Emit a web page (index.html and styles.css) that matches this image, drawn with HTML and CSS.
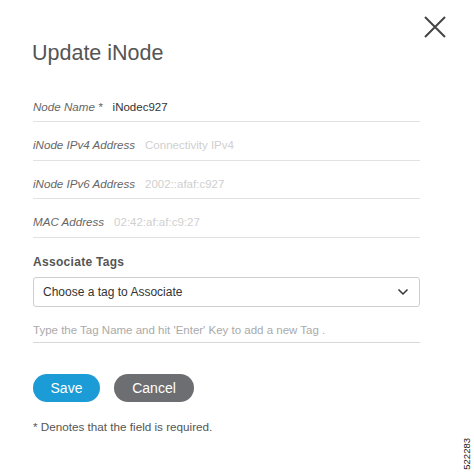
FILE: index.html
```html
<!DOCTYPE html>
<html lang="en">
<head>
    <meta charset="UTF-8">
    <meta name="viewport" content="width=device-width, initial-scale=1.0">
    <title>Update iNode</title>

    <link rel="stylesheet" href="styles.css">
</head>
<body>
    <div class="dialog">
        <div class="dialog-top">
            <button type="button" class="close-btn" aria-label="Close">
                <svg width="22" height="22" viewBox="0 0 22 22">
                    <path d="M1 1 L21 21 M21 1 L1 21" stroke="#444" stroke-width="2" fill="none"/>
                </svg>
            </button>
        </div>

        <h1 class="dialog-title">Update iNode</h1>

        <form class="inode-form">
            <!-- Champs de l'iNode -->
            <div class="field">
                <label>Node Name *</label>
                <span class="value">iNodec927</span>
            </div>
            <div class="field">
                <label>iNode IPv4 Address</label>
                <span class="value muted">Connectivity IPv4</span>
            </div>
            <div class="field">
                <label>iNode IPv6 Address</label>
                <span class="value muted">2002::afaf:c927</span>
            </div>
            <div class="field">
                <label>MAC Address</label>
                <span class="value muted">02:42:af:af:c9:27</span>
            </div>

            <!-- Tags -->
            <div class="tags-label">Associate Tags</div>
            <div class="tag-select">
                <span>Choose a tag to Associate</span>
                <svg width="12" height="8" viewBox="0 0 12 8">
                    <path d="M1.5 1.5 L6 6 L10.5 1.5" stroke="#333" stroke-width="1.5" fill="none"/>
                </svg>
            </div>
            <input type="text" class="tag-input" placeholder="Type the Tag Name and hit 'Enter' Key to add a new Tag .">

            <!-- Boutons -->
            <div class="form-buttons">
                <button type="button" class="btn save-btn">Save</button>
                <button type="button" class="btn cancel-btn">Cancel</button>
            </div>

            <p class="note">* Denotes that the field is required.</p>
        </form>

        <span class="figure-id">522283</span>
    </div>
</body>
</html>
```

FILE: styles.css
```css
/* Style général */
body {
    margin: 0;
    padding: 0;
    background-color: #fff;
    color: #333;
    font-family: "Liberation Sans", Arial, sans-serif;
}

.dialog {
    position: relative;
    width: 474px;
    height: 474px;
    padding-left: 33px;
    box-sizing: border-box;
}

.dialog-top {
    display: flex;
    justify-content: flex-end;
    padding: 16px 28px 0 0;
    height: 22px;
}

.close-btn {
    width: 22px;
    height: 22px;
    padding: 0;
    border: none;
    background: none;
    cursor: pointer;
}

.close-btn svg {
    display: block;
}

.dialog-title {
    margin: 2px 0 0 -1px;
    font-size: 21.5px;
    line-height: 26px;
    font-weight: normal;
    color: #555;
}

.inode-form {
    width: 387px;
    margin-top: 17.5px;
    display: flex;
    flex-direction: column;
}

.field {
    display: flex;
    align-items: baseline;
    gap: 10px;
    padding: 14px 0 5.5px;
    line-height: 18px;
    border-bottom: 1px solid #e2e2e2;
}

.field label {
    font-size: 11.6px;
    font-style: italic;
    color: #666;
}

.field .value {
    font-size: 11.5px;
    color: #333;
}

.field .value.muted {
    color: #cfcfcf;
}

.tags-label {
    margin-top: 16px;
    font-size: 12px;
    line-height: 16px;
    font-weight: bold;
    letter-spacing: 0.3px;
    color: #555;
}

.tag-select {
    display: flex;
    align-items: center;
    justify-content: space-between;
    margin-top: 7px;
    height: 30px;
    padding: 0 10px 0 9px;
    border: 1px solid #cfcfcf;
    border-radius: 3px;
    box-sizing: border-box;
    font-size: 12px;
    color: #333;
}

.tag-select svg {
    display: block;
}

.tag-input {
    height: 36px;
    padding: 12px 0 0;
    border: none;
    border-bottom: 1px solid #d8d8d8;
    box-sizing: border-box;
    font-family: inherit;
    font-size: 11.5px;
    color: #333;
    outline: none;
}

.tag-input::placeholder {
    color: #aaa;
}

.form-buttons {
    display: flex;
    gap: 14px;
    margin-top: 31px;
}

.btn {
    height: 28px;
    border: none;
    border-radius: 14px;
    font-family: inherit;
    font-size: 14px;
    color: #fff;
    cursor: pointer;
}

.save-btn {
    width: 67px;
    padding: 0;
    background-color: #1c9cd6;
}

.cancel-btn {
    width: 80px;
    padding: 0;
    background-color: #6d6e71;
}

.note {
    margin: 17px 0 0;
    font-size: 11.7px;
    line-height: 16px;
    color: #555;
}

/* numéro de figure, vertical dans le coin */
.figure-id {
    position: absolute;
    right: 3px;
    bottom: 4px;
    writing-mode: vertical-rl;
    transform: rotate(180deg);
    font-size: 9.5px;
    line-height: 9px;
    color: #222;
}
```
